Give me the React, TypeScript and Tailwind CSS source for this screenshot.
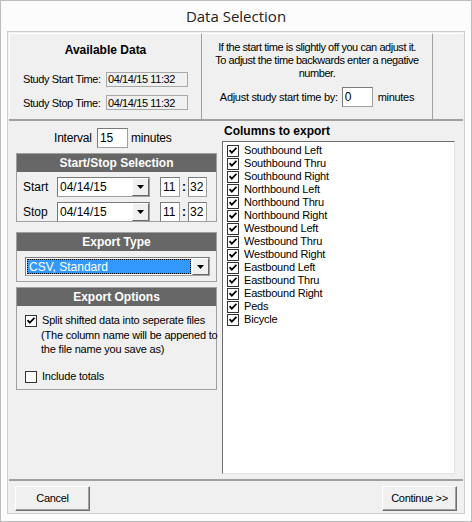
import React from "react";

const columns = [
  "Southbound Left",
  "Southbound Thru",
  "Southbound Right",
  "Northbound Left",
  "Northbound Thru",
  "Northbound Right",
  "Westbound Left",
  "Westbound Thru",
  "Westbound Right",
  "Eastbound Left",
  "Eastbound Thru",
  "Eastbound Right",
  "Peds",
  "Bicycle",
];

// caja de seleccion estilo windows clasico
const Check = ({ checked }: { checked: boolean }) => (
  <span className="w-[12px] h-[12px] shrink-0 border border-[#333] bg-white flex items-center justify-center">
    {checked && (
      <svg width="8" height="7" viewBox="0 0 8 7">
        <path d="M0.5 3.2 L2.8 5.6 L7.5 0.8" fill="none" stroke="#000" strokeWidth="1.8" />
      </svg>
    )}
  </span>
);

const DropBtn = () => (
  <span className="w-[17px] h-full shrink-0 bg-[#f0f0f0] border border-t-white border-l-white border-b-[#696969] border-r-[#696969] flex items-center justify-center">
    <svg width="7" height="4" viewBox="0 0 7 4">
      <path d="M0 0 H7 L3.5 4 Z" fill="#000" />
    </svg>
  </span>
);

const Field = ({ className, children }: { className: string; children: React.ReactNode }) => (
  <div
    className={`bg-white border border-[#a0a0a0] border-t-[#7a7a7a] border-l-[#7a7a7a] flex items-center pl-[2px] whitespace-nowrap ${className}`}
  >
    {children}
  </div>
);

const Header = ({ title }: { title: string }) => (
  <div className="h-[18px] shrink-0 bg-[#676767] text-white font-bold text-[12px] tracking-normal flex items-center justify-center">
    {title}
  </div>
);

const Button = ({ label }: { label: string }) => (
  <button className="w-[75px] h-[25px] bg-[#f0f0f0] border border-t-white border-l-white border-b-[#6e6e6e] border-r-[#6e6e6e] shadow-[inset_-1px_-1px_0_#a0a0a0] text-[11px] text-black tracking-[-0.3px]">
    {label}
  </button>
);

export default function App() {
  return (
    <div className="w-[472px] h-[522px] border border-[#bcbcbc] bg-[#fcfcfc] flex flex-col font-['Liberation_Sans',Arial,sans-serif] text-[11px] text-black whitespace-nowrap">
      {/* Titulo */}
      <div className="h-[30px] flex items-center justify-center text-[15px] text-[#222] font-['Open_Sans',sans-serif]">
        Data Selection
      </div>

      <div className="mx-[6px] h-[483px] border border-[#cdcdcd] bg-[#f0f0f0] p-px flex flex-col">
        {/* Datos disponibles */}
        <div className="h-[88px] shrink-0 flex border-b-2 border-[#a0a0a0]">
          <div className="w-[193px] border-r border-[#a0a0a0] border-t border-l border-t-white border-l-white flex flex-col">
            <div className="text-center font-bold text-[12px] mt-[7px]">Available Data</div>
            <div className="flex items-center mt-[12px] pl-[13px] tracking-[-0.4px]">
              <span className="w-[83px]">Study Start Time:</span>
              <span className="w-[82px] h-[15px] border border-[#a8a8a8] bg-[#f0f0f0] flex items-center pl-px">
                04/14/15 11:32
              </span>
            </div>
            <div className="flex items-center mt-[7px] pl-[13px] tracking-[-0.4px]">
              <span className="w-[83px]">Study Stop Time:</span>
              <span className="w-[82px] h-[15px] border border-[#a8a8a8] bg-[#f0f0f0] flex items-center pl-px">
                04/14/15 11:32
              </span>
            </div>
          </div>
          <div className="w-[231px] border-r border-[#a0a0a0] border-t border-t-white flex flex-col items-center">
            <p className="text-center leading-[13px] mt-[7px] tracking-[-0.45px]">
              If the start time is slightly off you can adjust it.
              <br />
              To adjust the time backwards enter a negative
              <br />
              number.
            </p>
            <div className="flex items-center mt-[7px] gap-[4px] tracking-[-0.3px]">
              <span>Adjust study start time by:</span>
              <Field className="w-[31px] h-[20px] text-[12px]">0</Field>
              <span className="ml-px">minutes</span>
            </div>
          </div>
          <div className="flex-1 border-t border-t-white" />
        </div>

        {/* Contenido principal */}
        <div className="h-[358px] shrink-0 flex">
          <div className="w-[213px] pl-[7px] pt-[7px] flex flex-col">
            <div className="flex items-center h-[20px] text-[12px] tracking-[-0.2px]">
              <span className="ml-[38px] w-[43px]">Interval</span>
              <Field className="w-[31px] h-[20px]">15</Field>
              <span className="ml-[3px]">minutes</span>
            </div>

            {/* Seleccion inicio/fin */}
            <div className="mt-[5px] w-[201px] h-[69px] border border-[#a0a0a0] flex flex-col">
              <Header title="Start/Stop Selection" />
              {["Start", "Stop"].map((label) => (
                <div key={label} className="flex items-center h-[20px] mt-[5px] text-[12px]">
                  <span className="w-[40px] pl-[6px]">{label}</span>
                  <Field className="w-[93px] h-[20px] pr-0">
                    <span className="flex-1">04/14/15</span>
                    <DropBtn />
                  </Field>
                  <Field className="ml-[10px] w-[20px] h-[20px]">11</Field>
                  <span className="w-[8px] text-center font-bold">:</span>
                  <Field className="w-[19px] h-[20px] pl-px">32</Field>
                </div>
              ))}
            </div>

            {/* Tipo de exportacion */}
            <div className="mt-[10px] w-[201px] h-[50px] border border-[#a0a0a0] flex flex-col">
              <Header title="Export Type" />
              <div className="ml-[8px] mt-[6px] w-[185px] h-[19px] bg-white border border-[#a0a0a0] border-t-[#7a7a7a] border-l-[#7a7a7a] flex items-center">
                <div className="flex-1 h-[15px] ml-px bg-[#3399ff] border border-dotted border-black text-white text-[12px] flex items-center pl-px">
                  CSV, Standard
                </div>
                <span className="ml-px h-[17px] flex">
                  <DropBtn />
                </span>
              </div>
            </div>

            {/* Opciones de exportacion */}
            <div className="mt-[5px] w-[201px] h-[103px] border border-[#a0a0a0] flex flex-col text-[11px] tracking-[-0.2px]">
              <Header title="Export Options" />
              <div className="flex items-center gap-[5px] h-[13px] mt-[8px] ml-[8px]">
                <Check checked />
                <span>Split shifted data into seperate files</span>
              </div>
              <p className="ml-[24px] leading-[14px] mt-[1px]">
                (The column name will be appened to
                <br />
                the file name you save as)
              </p>
              <div className="flex items-center gap-[5px] h-[13px] mt-[14px] ml-[8px]">
                <span className="w-[12px] h-[12px] border border-[#333] bg-white" />
                <span>Include totals</span>
              </div>
            </div>
          </div>

          {/* Columnas a exportar */}
          <div className="flex-1 flex flex-col pt-[3px]">
            <div className="font-bold text-[12px] pl-[2px] h-[15px] leading-[15px]">Columns to export</div>
            <div className="mt-[2px] w-[233px] h-[333px] bg-white border border-t-[#6d6d6d] border-l-[#6d6d6d] border-b-[#e3e3e3] border-r-[#e3e3e3] pt-[2px] pl-[4px]">
              {columns.map((c) => (
                <div key={c} className="h-[13px] flex items-center gap-[5px]">
                  <Check checked />
                  <span className="leading-[13px] tracking-[-0.2px]">{c}</span>
                </div>
              ))}
            </div>
          </div>
        </div>

        {/* Botones */}
        <div className="flex-1 border-t-2 border-[#a0a0a0] flex items-start justify-between pt-[5px] px-[6px]">
          <Button label="Cancel" />
          <Button label="Continue >>" />
        </div>
      </div>
    </div>
  );
}
